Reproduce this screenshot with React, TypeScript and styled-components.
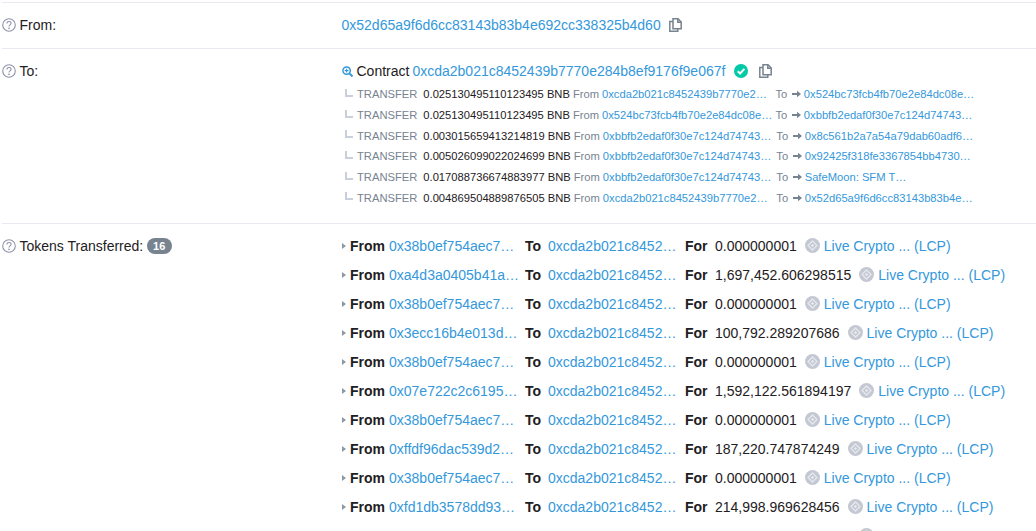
import React from 'react';
import styled, { createGlobalStyle } from 'styled-components';

const Global = createGlobalStyle`
  html, body { margin: 0; padding: 0; background: #fff; height: 531px; overflow: hidden; }
  body { font-family: "Liberation Sans", Arial, sans-serif; font-size: 14px; color: #1e2022; }
`;
const Page = styled.div`
  height: 531px; overflow: hidden; padding: 2px 0 0 2px; box-sizing: border-box;
`;
const Row = styled.section<{ $h: number }>`
  display: grid; grid-template-columns: 339.5px 1fr;
  border-top: 1px solid #e7eaf3;
  height: ${p => p.$h}px; padding-top: 14px; box-sizing: border-box;
`;
const Label = styled.div`
  display: flex; align-items: center; gap: 3.5px; height: 16px; line-height: 16px; color: #1e2022;
`;
const Badge = styled.span`
  background: #77838f; color: #fff; font-size: 11px; font-weight: 700;
  border-radius: 8px; height: 16px; line-height: 16px; width: 25px; text-align: center;
`;
const Value = styled.div`
  display: flex; align-items: center; height: 16px; line-height: 16px; white-space: nowrap;
`;
const Link = styled.span`color: #3498db;`;
const CopyBtn = styled.span<{ $ml: number }>`
  display: inline-flex; margin-left: ${p => p.$ml}px;
`;
const ContractWord = styled.span`margin: 0 3px 0 4px;`;
const Verified = styled.span`display: inline-flex; margin-left: 9px;`;
const InternalList = styled.div`margin-top: 5px;`;
const Internal = styled.div`
  display: flex; align-items: center; height: 20.7px; padding-left: 0.5px;
  font-size: 11.2px; white-space: nowrap; color: #77838f;
`;
const Corner = styled.span`
  width: 6px; height: 6px; margin: -3px 4px 0 3px; flex: none;
  border-left: 2px solid #c9cfdb; border-bottom: 2px solid #c9cfdb;
`;
const Amount = styled.span`color: #1e2022; margin: 0 3px 0 6px;`;
const FromCell = styled.span`
  display: inline-block; width: 173.5px; margin-left: 3px; color: #3498db;
`;
const ToArrow = styled.span`display: inline-flex; margin: 0 3px 0 4.5px;`;
const TokenList = styled.div`margin-top: -7px; padding-left: 0.5px;`;
const Token = styled.div`
  display: flex; align-items: center; height: 29px; white-space: nowrap;
`;
const Caret = styled.span`
  width: 0; height: 0; border-left: 4px solid #8c98a4; border-top: 3px solid transparent;
  border-bottom: 3px solid transparent; margin-right: 4px;
`;
const B = styled.b<{ $w?: number }>`
  display: inline-block; color: #1e2022; ${p => (p.$w ? `width:${p.$w}px;` : '')}
`;
const FromAddr = styled.span`display: inline-block; width: 136px; margin-left: 4px; color: #3498db;`;
const ToAddr = styled.span`display: inline-block; width: 137px; color: #3498db;`;
const Num = styled.span`margin-right: 8px; color: #1e2022;`;
const CoinLabel = styled.span`margin-left: 4px; color: #3498db;`;
const NextCoin = styled.div`height: 29px; padding: 7px 0 0 517px; box-sizing: border-box;`;

const Help = () => (
  <svg width="14" height="14" viewBox="0 0 14 14" fill="none">
    <circle cx="7" cy="7" r="6.3" stroke="#8f93a8" strokeWidth="1.100" />
    <path d="M4.900 5.400c0-1.200 1-1.900 2.100-1.900s2.100.7 2.100 1.800c0 1.600-2.100 1.500-2.100 3.100" stroke="#8f93a8" strokeWidth="1.100" />
    <circle cx="7" cy="10.400" r=".8" fill="#8f93a8" />
  </svg>
);
const Copy = () => (
  <svg width="13" height="14" viewBox="0 0 13 14" fill="none" stroke="#77838f" strokeWidth="1.500">
    <path d="M4 .8h5l3.200 3.200v6.800H4z" fill="#fff" />
    <path d="M8.800.8v3.500h3.400" />
    <path d="M4 3.500H.8v9.700h8v-2.400" />
  </svg>
);
const Search = () => (
  <svg width="11" height="11" viewBox="0 0 11 11" fill="none" stroke="#3498db">
    <circle cx="4.600" cy="4.600" r="3.700" strokeWidth="1.500" />
    <path d="M7.400 7.400l3.100 3.100" strokeWidth="2" />
    <path d="M2.700 4.600h3.800M4.600 2.700v3.800" strokeWidth="1.100" />
  </svg>
);
const Check = () => (
  <svg width="14" height="14" viewBox="0 0 14 14">
    <circle cx="7" cy="7" r="7" fill="#00c9a7" />
    <path d="M3.700 7.200l2.400 2.300 4.300-4.600" stroke="#fff" strokeWidth="2" fill="none" />
  </svg>
);
const ArrowIcon = () => (
  <svg width="9" height="8" viewBox="0 0 9 8" fill="#77838f">
    <path d="M0 3h5V.8L9 4 5 7.200V5H0z" />
  </svg>
);
const Coin = () => (
  <svg width="15" height="15" viewBox="0 0 15 15">
    <circle cx="7.500" cy="7.500" r="7.500" fill="#c4c8d2" />
    <path d="M7.500 3l4.500 4.500-4.500 4.500L3 7.500z" fill="none" stroke="#e6e8ee" strokeWidth="1.300" />
    <path d="M7.500 5.900l1.600 1.600-1.600 1.600-1.600-1.600z" fill="#eceef2" />
  </svg>
);

const internals = [
  ['0.025130495110123495', '0xcda2b021c8452439b7770e2…', '0x524bc73fcb4fb70e2e84dc08e…'],
  ['0.025130495110123495', '0x524bc73fcb4fb70e2e84dc08e…', '0xbbfb2edaf0f30e7c124d74743…'],
  ['0.003015659413214819', '0xbbfb2edaf0f30e7c124d74743…', '0x8c561b2a7a54a79dab60adf6…'],
  ['0.005026099022024699', '0xbbfb2edaf0f30e7c124d74743…', '0x92425f318fe3367854bb4730…'],
  ['0.017088736674883977', '0xbbfb2edaf0f30e7c124d74743…', 'SafeMoon: SFM T…'],
  ['0.004869504889876505', '0xcda2b021c8452439b7770e2…', '0x52d65a9f6d6cc83143b83b4e…'],
];

const A = '0x38b0ef754aec7…';
const tokens = [
  [A, '0.000000001'],
  ['0xa4d3a0405b41a…', '1,697,452.606298515'],
  [A, '0.000000001'],
  ['0x3ecc16b4e013d…', '100,792.289207686'],
  [A, '0.000000001'],
  ['0x07e722c2c6195…', '1,592,122.561894197'],
  [A, '0.000000001'],
  ['0xffdf96dac539d2…', '187,220.747874249'],
  [A, '0.000000001'],
  ['0xfd1db3578dd93…', '214,998.969628456'],
];

export default function App() {
  return (
    <Page>
      <Global />
      <Row $h={46}>
        <Label><Help />From:</Label>
        <Value>
          <Link>0x52d65a9f6d6cc83143b83b4e692cc338325b4d60</Link>
          <CopyBtn $ml={8}><Copy /></CopyBtn>
        </Value>
      </Row>
      <Row $h={175}>
        <Label><Help />To:</Label>
        <div>
          <Value>
            <Search />
            <ContractWord>Contract</ContractWord>
            <Link>0xcda2b021c8452439b7770e284b8ef9176f9e067f</Link>
            <Verified><Check /></Verified>
            <CopyBtn $ml={11}><Copy /></CopyBtn>
          </Value>
          <InternalList>
            {internals.map((r, i) => (
              <Internal key={i}>
                <Corner />
                TRANSFER
                <Amount>{r[0]} BNB</Amount>
                From
                <FromCell>{r[1]}</FromCell>
                To
                <ToArrow><ArrowIcon /></ToArrow>
                <Link>{r[2]}</Link>
              </Internal>
            ))}
          </InternalList>
        </div>
      </Row>
      <Row $h={300}>
        <Label><Help />Tokens Transferred: <Badge>16</Badge></Label>
        <TokenList>
          {tokens.map((t, i) => (
            <Token key={i}>
              <Caret />
              <B>From</B>
              <FromAddr>{t[0]}</FromAddr>
              <B $w={23}>To</B>
              <ToAddr>0xcda2b021c8452…</ToAddr>
              <B $w={30}>For</B>
              <Num>{t[1]}</Num>
              <Coin />
              <CoinLabel>Live Crypto ... (LCP)</CoinLabel>
            </Token>
          ))}
          <NextCoin><Coin /></NextCoin>
        </TokenList>
      </Row>
    </Page>
  );
}
